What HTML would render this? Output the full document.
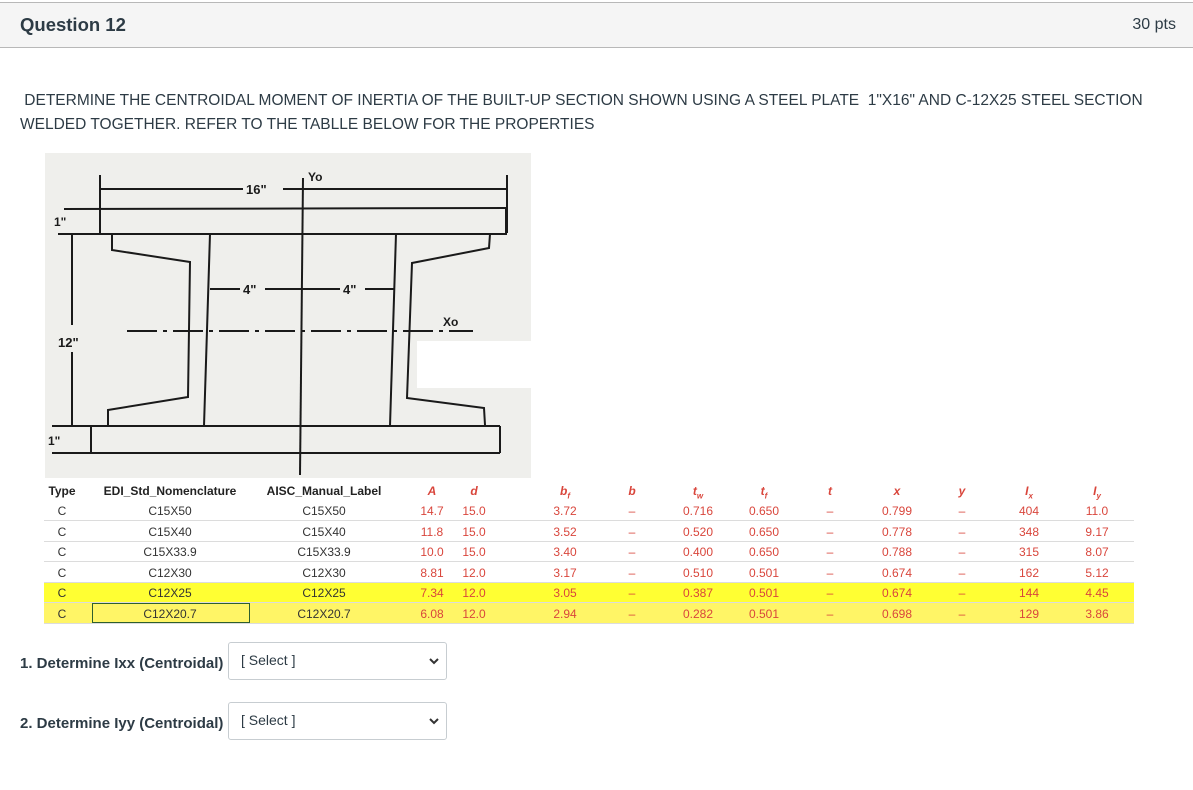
<!DOCTYPE html>
<html><head><meta charset="utf-8"><style>
body{margin:0;width:1193px;height:790px;background:#fff;position:relative;overflow:hidden;font-family:"Liberation Sans",sans-serif;color:#2d3b45}
.hdr{position:absolute;left:0;top:2px;width:1193px;height:44px;background:#f5f5f5;border-top:1px solid #b8b8b8;border-bottom:1px solid #b8b8b8}
.hdr .t{position:absolute;left:20px;top:11px;font-size:18.5px;font-weight:bold;color:#2d3b45}
.hdr .p{position:absolute;right:17px;top:13px;font-size:16px;color:#2d3b45}
.q{position:absolute;left:20px;top:89px;font-size:15.5px;line-height:24px;color:#2d3b45;white-space:nowrap}
.tbl{position:absolute;left:44px;top:478px;width:1090px;height:154px;background:#fff;overflow:hidden}
.c{position:absolute;font-size:12px;transform:translateX(-50%);white-space:nowrap}
.h{font-weight:bold;color:#222}
.r{color:#d9463c}
.k{color:#333}
.gl{position:absolute;background:#dcdcdc}
.lab{position:absolute;left:20px;font-size:15px;font-weight:bold;color:#2d3b45}
.sel{position:absolute;left:228px;width:217px;height:36px;border:1px solid #c7cdd1;border-radius:3px;background:#fff}
.sel span{position:absolute;left:12px;top:9px;font-size:14px;color:#2d3b45}
.sel svg{position:absolute;right:6px;top:14px}
</style></head><body>
<div class="hdr"><div class="t">Question 12</div><div class="p">30 pts</div></div>
<div class="q">&nbsp;DETERMINE THE CENTROIDAL MOMENT OF INERTIA OF THE BUILT-UP SECTION SHOWN USING A STEEL PLATE &nbsp;1"X16" AND C-12X25 STEEL SECTION<br>WELDED TOGETHER. REFER TO THE TABLLE BELOW FOR THE PROPERTIES</div>

<svg style="position:absolute;left:0;top:0" width="1193" height="480">
<rect x="45" y="153" width="486" height="326" fill="#efefec"/>
<g stroke="#1a1a1a" stroke-width="2" fill="none">
<line x1="100" y1="175" x2="100" y2="234"/><line x1="507" y1="175" x2="507" y2="233"/>
<line x1="100" y1="189" x2="243" y2="189"/><line x1="283" y1="189" x2="507" y2="189"/>
<line x1="64" y1="209" x2="506" y2="208"/><line x1="506" y1="208" x2="506" y2="233"/>
<line x1="58" y1="234" x2="507" y2="234"/>
<path d="M112 235 L112 250 L190 262 L188 397 L108 410 L108 426"/>
<line x1="210" y1="234" x2="204" y2="426"/>
<path d="M490 234 L489 248 L412 263 L407 398 L484 408 L485 425"/>
<line x1="396" y1="234" x2="390" y2="426"/>
<line x1="303" y1="178" x2="300" y2="475"/>
<line x1="52" y1="426" x2="500" y2="426"/><line x1="52" y1="453" x2="500" y2="453"/>
<line x1="91" y1="426" x2="91" y2="453"/><line x1="500" y1="426" x2="500" y2="453"/>
<line x1="72" y1="235" x2="72" y2="325"/><line x1="72" y1="352" x2="72" y2="426"/>
<line x1="210" y1="289" x2="240" y2="289"/><line x1="265" y1="289" x2="340" y2="289"/><line x1="365" y1="289" x2="395" y2="289"/>
<line x1="127" y1="331" x2="473" y2="331" stroke-dasharray="30 6 4 6"/>
</g>
<g font-family="Liberation Sans" font-weight="bold" font-size="13" fill="#1a1a1a">
<text x="246" y="194">16"</text><text x="308" y="181" font-size="12">Yo</text>
<text x="54" y="226" font-size="12">1"</text><text x="58" y="347">12"</text>
<text x="48" y="445" font-size="12">1"</text>
<text x="243" y="294">4"</text><text x="343" y="294">4"</text>
<text x="443" y="326" font-size="12">Xo</text>
</g>
<rect x="417" y="341" width="114" height="47" fill="#fff"/>
</svg>

<div class="tbl">
<div style="position:absolute;left:0;top:104px;width:1090px;height:20px;background:#ffff33"></div>
<div style="position:absolute;left:0;top:124px;width:1090px;height:22px;background:#fff566"></div>
<div style="position:absolute;left:48px;top:125px;width:156px;height:18px;border:1.5px solid #2e5e2e"></div>
</div>
<div style="position:absolute;left:0;top:0">
<div class="c h" style="left:62px;top:484px">Type</div>
<div class="c h" style="left:170px;top:484px">EDI_Std_Nomenclature</div>
<div class="c h" style="left:324px;top:484px">AISC_Manual_Label</div>
<div class="c r" style="left:432px;top:484px;font-weight:bold;font-style:italic">A</div>
<div class="c r" style="left:474px;top:484px;font-weight:bold;font-style:italic">d</div>
<div class="c r" style="left:565px;top:484px;font-weight:bold;font-style:italic">b<sub style="font-size:8px">f</sub></div>
<div class="c r" style="left:632px;top:484px;font-weight:bold;font-style:italic">b</div>
<div class="c r" style="left:698px;top:484px;font-weight:bold;font-style:italic">t<sub style="font-size:8px">w</sub></div>
<div class="c r" style="left:764px;top:484px;font-weight:bold;font-style:italic">t<sub style="font-size:8px">f</sub></div>
<div class="c r" style="left:830px;top:484px;font-weight:bold;font-style:italic">t</div>
<div class="c r" style="left:897px;top:484px;font-weight:bold;font-style:italic">x</div>
<div class="c r" style="left:962px;top:484px;font-weight:bold;font-style:italic">y</div>
<div class="c r" style="left:1029px;top:484px;font-weight:bold;font-style:italic">I<sub style="font-size:8px">x</sub></div>
<div class="c r" style="left:1097px;top:484px;font-weight:bold;font-style:italic">I<sub style="font-size:8px">y</sub></div>
</div>
<div id="rows"></div>
<script>
var d=[["C15X50","14.7","15.0","3.72","0.716","0.650","0.799","404","11.0"],
["C15X40","11.8","15.0","3.52","0.520","0.650","0.778","348","9.17"],
["C15X33.9","10.0","15.0","3.40","0.400","0.650","0.788","315","8.07"],
["C12X30","8.81","12.0","3.17","0.510","0.501","0.674","162","5.12"],
["C12X25","7.34","12.0","3.05","0.387","0.501","0.674","144","4.45"],
["C12X20.7","6.08","12.0","2.94","0.282","0.501","0.698","129","3.86"]];
var h="";
for(var i=0;i<6;i++){var y=504+i*20.5;var r=d[i];
h+='<div class="c k" style="left:62px;top:'+y+'px">C</div><div class="c k" style="left:170px;top:'+y+'px">'+r[0]+'</div><div class="c k" style="left:324px;top:'+y+'px">'+r[0]+'</div>';
var xs=[432,474,565,698,764,897,1029,1097];for(var j=0;j<8;j++)h+='<div class="c r" style="left:'+xs[j]+'px;top:'+y+'px">'+r[j+1]+'</div>';
[632,830,962].forEach(function(x){h+='<div class="c r" style="left:'+x+'px;top:'+y+'px">–</div>'});
h+='<div class="gl" style="left:44px;top:'+(y+16)+'px;width:1090px;height:1px"></div>';}
document.getElementById('rows').innerHTML=h;
</script>
<div class="lab" style="top:655px">1. Determine Ixx (Centroidal)</div>
<div class="sel" style="top:642px"><span>[ Select ]</span><svg width="12" height="8"><path d="M2 2 L6 6 L10 2" stroke="#333" stroke-width="2" fill="none"/></svg></div>
<div class="lab" style="top:715px">2. Determine Iyy (Centroidal)</div>
<div class="sel" style="top:702px"><span>[ Select ]</span><svg width="12" height="8"><path d="M2 2 L6 6 L10 2" stroke="#333" stroke-width="2" fill="none"/></svg></div>
</body></html>
